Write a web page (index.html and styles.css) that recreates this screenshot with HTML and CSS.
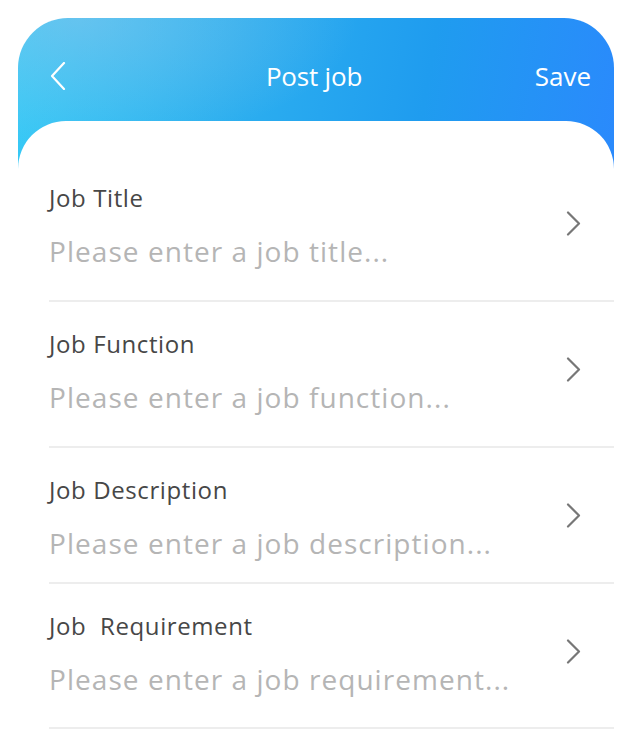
FILE: index.html
```html
<!DOCTYPE html>
<html lang="en">
<head>
<meta charset="utf-8">
<title>Post job</title>
<link rel="stylesheet" href="styles.css">
</head>
<body>
<div class="card">
  <header class="topbar">
    <button class="back" aria-label="Back">
      <svg width="16" height="28" viewBox="0 0 16 28"><path d="M14 1 L2 14 L14 27" fill="none" stroke="#fff" stroke-width="2.2" stroke-linecap="round" stroke-linejoin="round"/></svg>
    </button>
    <h1 class="title">Post job</h1>
    <button class="save">Save</button>
  </header>
  <main class="panel">
    <div class="row">
      <div class="fields">
        <div class="label">Job Title</div>
        <div class="placeholder">Please enter a job title...</div>
      </div>
      <svg class="chev" width="15" height="25" viewBox="0 0 15 25"><path d="M2 1.5 L13 12.5 L2 23.5" fill="none" stroke="#777" stroke-width="2.2" stroke-linecap="round" stroke-linejoin="round"/></svg>
    </div>
    <div class="row">
      <div class="fields">
        <div class="label">Job Function</div>
        <div class="placeholder">Please enter a job function...</div>
      </div>
      <svg class="chev" width="15" height="25" viewBox="0 0 15 25"><path d="M2 1.5 L13 12.5 L2 23.5" fill="none" stroke="#777" stroke-width="2.2" stroke-linecap="round" stroke-linejoin="round"/></svg>
    </div>
    <div class="row row-tight">
      <div class="fields">
        <div class="label">Job Description</div>
        <div class="placeholder">Please enter a job description...</div>
      </div>
      <svg class="chev" width="15" height="25" viewBox="0 0 15 25"><path d="M2 1.5 L13 12.5 L2 23.5" fill="none" stroke="#777" stroke-width="2.2" stroke-linecap="round" stroke-linejoin="round"/></svg>
    </div>
    <div class="row row-last">
      <div class="fields">
        <div class="label">Job&nbsp; Requirement</div>
        <div class="placeholder">Please enter a job requirement...</div>
      </div>
      <svg class="chev" width="15" height="25" viewBox="0 0 15 25"><path d="M2 1.5 L13 12.5 L2 23.5" fill="none" stroke="#777" stroke-width="2.2" stroke-linecap="round" stroke-linejoin="round"/></svg>
    </div>
  </main>
</div>
</body>
</html>
```

FILE: styles.css
```css
* { box-sizing: border-box; }
html, body { margin: 0; padding: 0; background: #fff; }
body {
  font-family: "Open Sans", Roboto, "Liberation Sans", sans-serif;
  padding: 18px 17px 0 18px;
  overflow: hidden;
  height: 752px;
}
.card {
  border-radius: 50px 50px 0 0;
  background:
    radial-gradient(ellipse 280px 130px at 60px 0px, rgba(140,195,235,0.55), rgba(140,195,235,0) 100%),
    linear-gradient(100deg, #38cbf6 0%, #2db0ef 30%, #1f9cef 58%, #2a8afc 85%, #2b86fd 100%);
  height: 734px;
  display: flex;
  flex-direction: column;
}
.topbar {
  height: 103px;
  flex: none;
  display: grid;
  grid-template-columns: 1fr auto 1fr;
  align-items: center;
  padding: 40px 23px 27px 32px;
}
.back {
  background: none; border: 0; padding: 0; margin: 0;
  width: 16px; height: 28px; display: flex;
  justify-self: start;
}
.title {
  margin: 0 13px 0 0;
  font-weight: 400;
  font-size: 26px;
  line-height: 36px;
  color: #fff;
  letter-spacing: -0.2px;
}
.save {
  justify-self: end;
  background: none; border: 0; padding: 0; margin: 0;
  font-family: inherit;
  font-size: 26px;
  line-height: 36px;
  color: #fff;
}
.panel {
  flex: 1;
  background: #fff;
  border-radius: 48px 48px 0 0;
  padding-top: 35px;
}
.row {
  margin-left: 31px;
  display: flex;
  align-items: center;
  justify-content: space-between;
  padding: 27px 33px 31px 0;
  border-bottom: 2px solid #ededed;
}
.row-tight { padding-bottom: 21px; }
.row-last { padding-bottom: 30px; }
.fields { display: flex; flex-direction: column; gap: 20px; }
.label {
  font-size: 24px;
  line-height: 30px;
  letter-spacing: 0.6px;
  color: #474747;
}
.placeholder {
  font-size: 28px;
  line-height: 36px;
  letter-spacing: 1.05px;
  color: #b5b5b5;
}
.chev { display: block; margin-top: -6px; }
```
